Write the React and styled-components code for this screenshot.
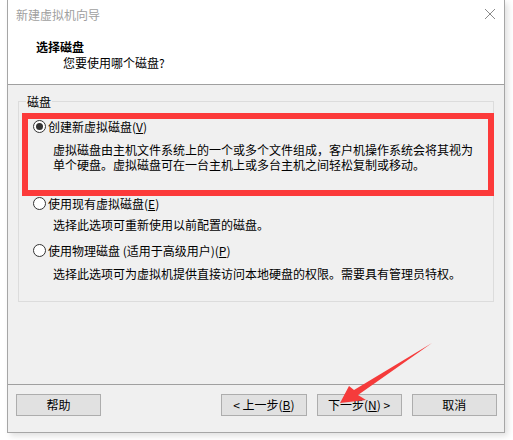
import React from 'react'
import styled, { createGlobalStyle } from 'styled-components'

const Global = createGlobalStyle`
  html, body {
    margin: 0;
    padding: 0;
    background: #ffffff;
  }
  body {
    font-family: "Noto Sans CJK SC", "Liberation Sans", sans-serif;
    font-size: 12px;
    color: #000;
  }
`

const Page = styled.div`
  position: relative;
  width: 513px;
  height: 440px;
  overflow: hidden;
`

const Window = styled.div`
  margin-left: 7px;
  width: 496px;
  height: 432px;
  border: 1px solid #a6a6a6;
  border-top: none;
  background: #f0f0f0;
  box-shadow: 3px 3px 6px rgba(0, 0, 0, 0.12);
  display: flex;
  flex-direction: column;
`

const TitleBar = styled.div`
  height: 30px;
  background: #fff;
  display: flex;
  align-items: center;
  justify-content: space-between;
  padding: 0 6px 0 8px;
  color: #a0a0a0;
  font-size: 12px;
`

const CloseBtn = styled.div`
  width: 16px;
  height: 16px;
  display: flex;
  align-items: center;
  justify-content: center;
`

const Header = styled.div`
  height: 57px;
  background: #fff;
  border-bottom: 1px solid #a0a0a0;
  padding-left: 28px;
  display: flex;
  flex-direction: column;
`

const HeaderTitle = styled.div`
  font-weight: 700;
  margin-top: 10px;
  line-height: 16px;
`

const HeaderSub = styled.div`
  margin-left: 27px;
  line-height: 16px;
`

const Body = styled.div`
  flex: 1;
  padding: 10px 10px 0 10px;
`

const Group = styled.fieldset`
  margin: 0;
  height: 207px;
  box-sizing: border-box;
  border: 1px solid #dcdcdc;
  padding: 10px 0 0 14px;
`

const Legend = styled.legend`
  padding: 0 1px;
  margin-left: -7px;
  line-height: 14px;
`

const Option = styled.div`
  margin-top: ${p => p.gap || 0}px;
`

const Row = styled.label`
  display: flex;
  align-items: center;
  height: 16px;
  gap: 2px;
`

const Radio = styled.span`
  width: 11px;
  height: 11px;
  border: 1px solid #333;
  border-radius: 50%;
  background: #fff;
  display: flex;
  align-items: center;
  justify-content: center;
  &::after {
    content: '';
    width: 7px;
    height: 7px;
    border-radius: 50%;
    background: ${p => (p.checked ? '#333' : 'transparent')};
  }
`

const Key = styled.span`
  text-decoration: underline;
`

const Desc = styled.div`
  margin-left: 20px;
  margin-top: ${p => p.top ?? 7}px;
  line-height: 15px;
`

const Footer = styled.div`
  border-top: 1px solid #a0a0a0;
  height: 40px;
  display: flex;
  align-items: flex-start;
  padding: 9px 7px 0 8px;
  margin-top: 82px;
  gap: 10px;
`

const Button = styled.button`
  width: 86px;
  height: 22px;
  border: 1px solid #adadad;
  background: #e1e1e1;
  font-family: "Noto Sans CJK SC", "Liberation Sans", sans-serif;
  font-size: 12px;
  color: #000;
  padding: 0;
  margin-left: ${p => p.push || 0}px;
`

const RedBox = styled.div`
  position: absolute;
  left: 22px;
  top: 113px;
  width: 472px;
  height: 83px;
  box-sizing: border-box;
  border: 6px solid #fc3a3a;
  pointer-events: none;
`

const ArrowLayer = styled.svg`
  position: absolute;
  left: 0;
  top: 0;
  pointer-events: none;
`

export default function App() {
  return (
    <Page>
      <Global />
      <Window>
        <TitleBar>
          <span>新建虚拟机向导</span>
          <CloseBtn>
            <svg width="12" height="12" viewBox="0 0 12 12">
              <path d="M1 1L11 11M11 1L1 11" stroke="#8a8a8a" strokeWidth="1" />
            </svg>
          </CloseBtn>
        </TitleBar>
        <Header>
          <HeaderTitle>选择磁盘</HeaderTitle>
          <HeaderSub>您要使用哪个磁盘?</HeaderSub>
        </Header>
        <Body>
          <Group>
            <Legend>磁盘</Legend>
            <Option>
              <Row>
                <Radio checked />
                <span>创建新虚拟磁盘(<Key>V</Key>)</span>
              </Row>
              <Desc>
                <div>虚拟磁盘由主机文件系统上的一个或多个文件组成，客户机操作系统会将其视为</div>
                <div>单个硬盘。虚拟磁盘可在一台主机上或多台主机之间轻松复制或移动。</div>
              </Desc>
            </Option>
            <Option gap={24}>
              <Row>
                <Radio />
                <span>使用现有虚拟磁盘(<Key>E</Key>)</span>
              </Row>
              <Desc top={5}>选择此选项可重新使用以前配置的磁盘。</Desc>
            </Option>
            <Option gap={11}>
              <Row>
                <Radio />
                <span>使用物理磁盘 (适用于高级用户)(<Key>P</Key>)</span>
              </Row>
              <Desc>选择此选项可为虚拟机提供直接访问本地硬盘的权限。需要具有管理员特权。</Desc>
            </Option>
          </Group>
        </Body>
        <Footer>
          <Button>帮助</Button>
          <Button push={110}>&lt; 上一步(<Key>B</Key>)</Button>
          <Button>下一步(<Key>N</Key>) &gt;</Button>
          <Button>取消</Button>
        </Footer>
      </Window>
      <RedBox />
      <ArrowLayer width="513" height="440" viewBox="0 0 513 440">
        <polygon
          points="340,403 349,386 354,390 432,343 358,395 366,400"
          fill="#f53b3b"
        />
      </ArrowLayer>
    </Page>
  )
}
